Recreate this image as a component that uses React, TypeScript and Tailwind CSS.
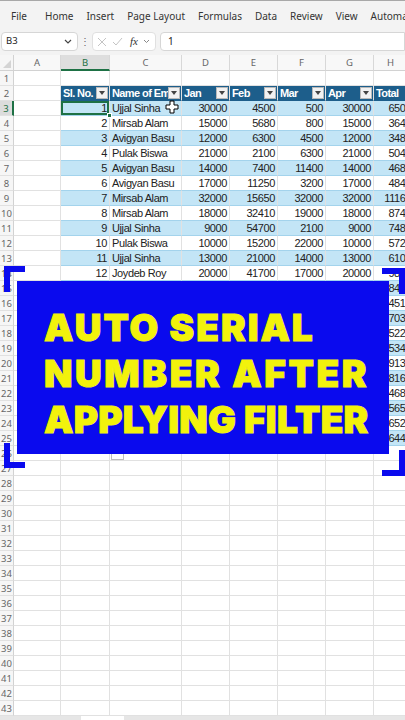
import React from 'react';

type Row = [number, string, number, number, number, number];

const data: Row[] = [
  [1, 'Ujjal Sinha', 30000, 4500, 500, 30000],
  [2, 'Mirsab Alam', 15000, 5680, 800, 15000],
  [3, 'Avigyan Basu', 12000, 6300, 4500, 12000],
  [4, 'Pulak Biswa', 21000, 2100, 6300, 21000],
  [5, 'Avigyan Basu', 14000, 7400, 11400, 14000],
  [6, 'Avigyan Basu', 17000, 11250, 3200, 17000],
  [7, 'Mirsab Alam', 32000, 15650, 32000, 32000],
  [8, 'Mirsab Alam', 18000, 32410, 19000, 18000],
  [9, 'Ujjal Sinha', 9000, 54700, 2100, 9000],
  [10, 'Pulak Biswa', 10000, 15200, 22000, 10000],
  [11, 'Ujjal Sinha', 13000, 21000, 14000, 13000],
  [12, 'Joydeb Roy', 20000, 41700, 17000, 20000],
  [13, 'Pulak Biswa', 24000, 18500, 18000, 24000],
  [14, 'Mirsab Alam', 12000, 9600, 11500, 12000],
  [15, 'Ujjal Sinha', 20000, 16800, 13500, 20000],
  [16, 'Joydeb Roy', 15000, 8200, 14000, 15000],
  [17, 'Avigyan Basu', 16000, 9400, 12000, 16000],
  [18, 'Pulak Biswa', 25000, 21300, 20000, 25000],
  [19, 'Mirsab Alam', 22000, 19600, 18000, 22000],
  [20, 'Ujjal Sinha', 14000, 7800, 11000, 14000],
  [21, 'Joydeb Roy', 16000, 12500, 12000, 16000],
  [22, 'Avigyan Basu', 19000, 14200, 13000, 19000],
  [23, 'Pulak Biswa', 18000, 15400, 13000, 18000],
];

const widths = ['w-[47px]', 'w-[49px]', 'w-[72px]', 'w-[48px]', 'w-[48px]', 'w-[48px]', 'w-[48px]', 'w-[48px]'];
const letters = ['A', 'B', 'C', 'D', 'E', 'F', 'G', 'H'];
const headers = ['Sl. No.', 'Name of Em', 'Jan', 'Feb', 'Mar', 'Apr', 'Total'];
const menu = ['Home', 'Insert', 'Page Layout', 'Formulas', 'Data', 'Review', 'View', 'Automate'];

function FilterButton() {
  return (
    <span className="absolute right-[1px] top-[1px] w-[12px] h-[12px] bg-[#f2f2f2] border border-[#b9b9b9] flex items-center justify-center">
      <svg width="6" height="4" viewBox="0 0 6 4">
        <path d="M0 0h6L3 4z" fill="#444" />
      </svg>
    </span>
  );
}

function RowHeader({ n }: { n: number }) {
  const active = n === 3;
  return (
    <div
      className={`w-[14px] h-[15px] shrink-0 flex justify-center border-b border-[#e1e1e1] font-['Noto_Sans',sans-serif] text-[9.5px] leading-[15px] ${
        active ? 'bg-[#dcdcdc] text-[#1e7145] border-r-2 border-r-[#1e7145]' : 'bg-[#f6f6f6] text-[#666] border-r border-r-[#d2d2d2]'
      }`}
    >
      <span className="w-[10px] flex justify-center">{n}</span>
    </div>
  );
}

function SheetRow({ n }: { n: number }) {
  const rec = n >= 3 && n <= 25 ? data[n - 3] : null;
  const banded = rec && n % 2 === 1;
  const inTable = n >= 2 && n <= 25;
  // rows 15-25 sit under the title banner; only the Total column shows
  const covered = n >= 15 && n <= 25;
  return (
    <div className="flex h-[15px]">
      <RowHeader n={n} />
      {widths.map((w, i) => {
        const isTableCol = i >= 1;
        const base = `${w} h-[15px] shrink-0 relative border-r border-r-[#e1e1e1] text-[11px] leading-[14px] tracking-[-0.4px] whitespace-nowrap overflow-hidden`;
        if (n === 2 && isTableCol) {
          return (
            <div key={i} className={`${base} bg-[#1d5e8b] border-b border-b-[#1d5e8b] text-white font-bold pl-[2px] tracking-[-0.6px]`}>
              {headers[i - 1]}
              {i < 7 && <FilterButton />}
            </div>
          );
        }
        if (rec && isTableCol) {
          const bg = banded ? 'bg-[#c3e5f6]' : 'bg-white';
          let content: React.ReactNode = null;
          let align = 'text-right pr-[2px]';
          if (i === 1) content = rec[0];
          else if (i === 2) {
            content = rec[1];
            align = 'text-left pl-[2px]';
          } else if (i >= 3 && i <= 6) content = rec[i - 1];
          else {
            align = 'text-left pl-[6px]';
            content = (
              <span className="inline-block w-[37px] text-right">{rec[2] + rec[3] + rec[4] + rec[5]}</span>
            );
          }
          if (covered && i < 7) content = null;
          return (
            <div key={i} className={`${base} ${bg} ${align} border-b border-b-[#a3d3ec] text-[#222]`}>
              {content}
              {n === 3 && i === 1 && (
                <span className="absolute inset-0 border-2 border-[#1e7145]" />
              )}
            </div>
          );
        }
        return (
          <div
            key={i}
            className={`${base} border-b ${inTable && isTableCol ? 'border-b-[#a3d3ec]' : 'border-b-[#e1e1e1]'}`}
          />
        );
      })}
    </div>
  );
}

function Bracket({ className, d }: { className: string; d: string }) {
  return (
    <svg className={`absolute ${className}`} width="23" height="26" viewBox="0 0 23 26">
      <path d={d} fill="#0a0aee" />
    </svg>
  );
}

export default function App() {
  const rows = Array.from({ length: 43 }, (_, k) => k + 1);
  return (
    <div className="relative w-[405px] h-[720px] overflow-hidden bg-white flex flex-col font-['Liberation_Sans',sans-serif]">
      {/* ribbon tabs */}
      <div className="h-[31px] shrink-0 bg-[#f3f3f3] border-t border-[#a8a8a8] flex items-center pl-[11px] gap-[13px] font-['Noto_Sans',sans-serif] text-[10px] text-[#333] whitespace-nowrap">
        <span className="mr-[5px]">File</span>
        {menu.map((m) => (
          <span key={m}>{m}</span>
        ))}
      </div>

      {/* formula bar */}
      <div className="h-[24px] shrink-0 bg-[#f3f3f3] flex items-start pt-[1px] font-['Noto_Sans',sans-serif] text-[9.5px] text-[#222]">
        <div className="ml-[1px] w-[77px] h-[19px] bg-white border border-[#d6d6d6] rounded-[4px] flex items-center justify-between pl-[4px] pr-[5px]">
          <span>B3</span>
          <svg width="8" height="5" viewBox="0 0 8 5">
            <path d="M1 1l3 3 3-3" stroke="#444" strokeWidth="1.2" fill="none" />
          </svg>
        </div>
        <span className="w-[14px] h-[19px] flex items-center justify-center text-[#666] text-[10px]">⋮</span>
        <div className="w-[64px] h-[19px] bg-white border border-[#e0e0e0] rounded-[4px] flex items-center gap-[5px] pl-[4px]">
          <svg width="10" height="10" viewBox="0 0 10 10">
            <path d="M1 1l8 8M9 1l-8 8" stroke="#c4c4c4" strokeWidth="1" />
          </svg>
          <svg width="11" height="9" viewBox="0 0 11 9">
            <path d="M1 5l3 3 6-7" stroke="#c4c4c4" strokeWidth="1" fill="none" />
          </svg>
          <span className="font-['Liberation_Serif',serif] italic text-[11px] text-[#333] ml-[2px]">fx</span>
          <svg width="7" height="5" viewBox="0 0 7 5">
            <path d="M1 1l2.5 2.5L6 1" stroke="#888" strokeWidth="1" fill="none" />
          </svg>
        </div>
        <div className="ml-[4px] flex-1 h-[19px] bg-white border border-[#d6d6d6] rounded-l-[4px] flex items-center pl-[7px] text-[10px]">
          1
        </div>
      </div>

      {/* column headers */}
      <div className="flex h-[16px] shrink-0 font-['Noto_Sans',sans-serif] text-[9.5px] leading-[15px]">
        <div className="w-[14px] shrink-0 bg-[#f6f6f6] border-r border-b border-[#d2d2d2] flex items-end justify-end p-[2px]">
          <svg width="8" height="8" viewBox="0 0 8 8">
            <path d="M8 0v8H0z" fill="#d4d4d4" />
          </svg>
        </div>
        {letters.map((l, i) => (
          <div
            key={l}
            className={`${widths[i]} shrink-0 text-center border-r border-r-[#d8d8d8] ${
              i === 1
                ? 'bg-[#dedede] text-[#1e7145] border-b-2 border-b-[#1e7145]'
                : 'bg-[#f8f8f8] text-[#666] border-b border-b-[#d2d2d2]'
            } ${i === 7 ? 'pr-[14px]' : ''}`}
          >
            {l}
          </div>
        ))}
      </div>

      {/* grid */}
      <div className="flex flex-col shrink-0">
        {rows.map((n) => (
          <SheetRow key={n} n={n} />
        ))}
      </div>

      {/* sheet tabs strip */}
      <div className="flex-1 bg-[#e6e6e6] flex">
        <div className="ml-[81px] w-[43px] bg-white" />
      </div>

      {/* fill handle on B3 */}
      <span className="absolute left-[107px] top-[113px] w-[5px] h-[5px] bg-[#1e7145] border border-white" />

      {/* mouse cursor */}
      <svg className="absolute left-[165px] top-[100px]" width="14" height="14" viewBox="0 0 14 14">
        <path d="M5 1h4v4h4v4H9v4H5V9H1V5h4z" fill="#fff" stroke="#000" strokeWidth="1" />
      </svg>

      {/* table resize marker under banner */}
      <span className="absolute left-[111px] top-[451px] w-[13px] h-[9px] bg-white border border-[#bdbdbd]" />

      {/* corner brackets */}
      <Bracket className="left-[4px] top-[266px]" d="M0 0h21v6H6v20H0z" />
      <Bracket className="left-[4px] top-[443px]" d="M0 0h6v19h15v6H0z" />
      <Bracket className="left-[382px] top-[268px]" d="M0 0h23v26h-6V6H0z" />
      <Bracket className="left-[382px] top-[450px]" d="M17 0h6v26H0v-6h17z" />

      {/* title banner */}
      <div className="absolute left-[17px] top-[281px] w-[372px] h-[173px] bg-[#0a0aee] flex flex-col pl-[27px] pt-[24px] font-['Inter','Noto_Sans',sans-serif] font-black text-[37px] leading-[46px] text-[#f2f20c] whitespace-nowrap [-webkit-text-stroke:1px_#f2f20c]">
        <span className="tracking-[2px]">AUTO SERIAL</span>
        <span className="tracking-[2.6px]">NUMBER AFTER</span>
        <span className="tracking-[0.3px]">APPLYING FILTER</span>
      </div>
    </div>
  );
}
